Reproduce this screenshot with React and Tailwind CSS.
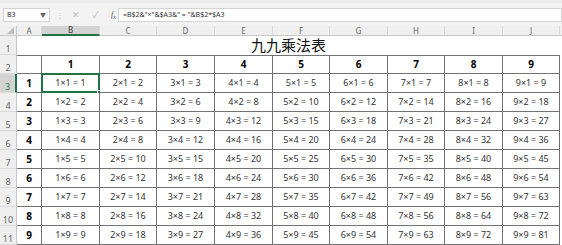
import React from "react";

const COLS = ["A", "B", "C", "D", "E", "F", "G", "H", "I", "J"];
const NUMS = [1, 2, 3, 4, 5, 6, 7, 8, 9];
const FORMULA = '=B$2&"×"&$A3&" = "&B$2*$A3';

function ColHeader({ label, selected }) {
  return (
    <div
      className={
        "flex items-center justify-center text-[8px] leading-none border-r border-[#d9d9d9] " +
        (selected
          ? "bg-[#d3d3d3] text-[#3b3b3b] border-b-2 border-b-[#217346]"
          : "bg-[#efefef] text-[#666] border-b border-b-[#c8c8c8]")
      }
    >
      {label}
    </div>
  );
}

function RowHeader({ n, selected }) {
  return (
    <div
      className={
        "flex items-end justify-center pb-[1px] text-[9px] leading-none border-b border-[#d9d9d9] " +
        (selected
          ? "bg-[#d3d3d3] text-[#2f7a52] border-r-2 border-r-[#217346]"
          : "bg-[#efefef] text-[#666] border-r border-r-[#c6c6c6]")
      }
    >
      {n}
    </div>
  );
}

function Cell({ children, bold, top, selected }) {
  return (
    <div
      className={
        "relative flex items-center justify-center bg-white border-r border-b border-[#737373] whitespace-nowrap " +
        (top ? "border-t " : "") +
        (bold ? "font-bold text-[10px] text-black" : "text-[9px] text-[#333]")
      }
    >
      {children}
      {selected && (
        <>
          <div className="absolute -top-[1px] -left-[1px] -right-[1px] -bottom-[1px] border-2 border-[#217346]" />
          <div className="absolute -right-[3px] -bottom-[3px] w-[5px] h-[5px] bg-[#217346] border border-white" />
        </>
      )}
    </div>
  );
}

export default function App() {
  return (
    <div className="w-[562px] h-[245px] overflow-hidden bg-[#f3f3f3] font-['Noto_Sans','Noto_Sans_CJK_SC',sans-serif]">
      {/* ribbon edge */}
      <div className="h-[3px] bg-[#ebebeb]" />

      {/* formula bar */}
      <div className="h-[23px] pt-[5px] flex items-start">
        <div className="ml-[3px] w-[47px] h-[14px] bg-white border border-[#d4d4d4] flex items-center justify-between px-[3px] text-[7px] text-[#333]">
          <span>B3</span>
          <span className="text-[6px] text-[#666]">▼</span>
        </div>
        <div className="w-[20px] h-[14px] flex items-center justify-center text-[8px] text-[#c4c4c4]">⋮</div>
        <div className="w-[48px] h-[14px] flex items-center justify-between px-[2px] text-[9px] text-[#bdbdbd]">
          <span>✕</span>
          <span>✓</span>
          <span className="italic text-[8px] text-[#555] font-['Liberation_Serif',serif]">f<sub className="text-[6px]">x</sub></span>
        </div>
        <div className="flex-1 h-[14px] bg-white border border-[#d4d4d4] flex items-center pl-[4px] text-[7px] text-[#333] whitespace-nowrap">
          {FORMULA}
        </div>
      </div>

      {/* sheet */}
      <div className="grid grid-cols-[17px_25px_58px_57px_58px_58px_57px_58px_57px_58px_57px_2px] grid-rows-[10px_repeat(11,19px)]">
        {/* column headers */}
        <div className="relative bg-[#efefef] border-r border-b border-[#c8c8c8]">
          <svg className="absolute right-[2px] bottom-[1px]" width="7" height="7" viewBox="0 0 7 7">
            <polygon points="7,0 7,7 0,7" fill="#bcbcbc" />
          </svg>
        </div>
        {COLS.map((c) => (
          <ColHeader key={c} label={c} selected={c === "B"} />
        ))}
        <div className="bg-[#efefef] border-b border-[#c8c8c8]" />

        {/* row 1: title merged A1:J1 */}
        <RowHeader n={1} />
        <div className="col-span-10 bg-white flex items-center justify-center text-[15px] text-[#111] font-['Noto_Sans_CJK_SC',sans-serif]">
          九九乘法表
        </div>
        <div className="bg-white" />

        {/* row 2: column numbers */}
        <RowHeader n={2} />
        <Cell top />
        {NUMS.map((n) => (
          <Cell key={n} top bold>
            {n}
          </Cell>
        ))}
        <div className="bg-white" />

        {/* rows 3-11 */}
        {NUMS.map((r) => (
          <React.Fragment key={r}>
            <RowHeader n={r + 2} selected={r === 1} />
            <Cell bold>{r}</Cell>
            {NUMS.map((c) => (
              <Cell key={c} selected={r === 1 && c === 1}>
                {`${c}×${r} = ${c * r}`}
              </Cell>
            ))}
            <div className="bg-white" />
          </React.Fragment>
        ))}
      </div>
    </div>
  );
}
